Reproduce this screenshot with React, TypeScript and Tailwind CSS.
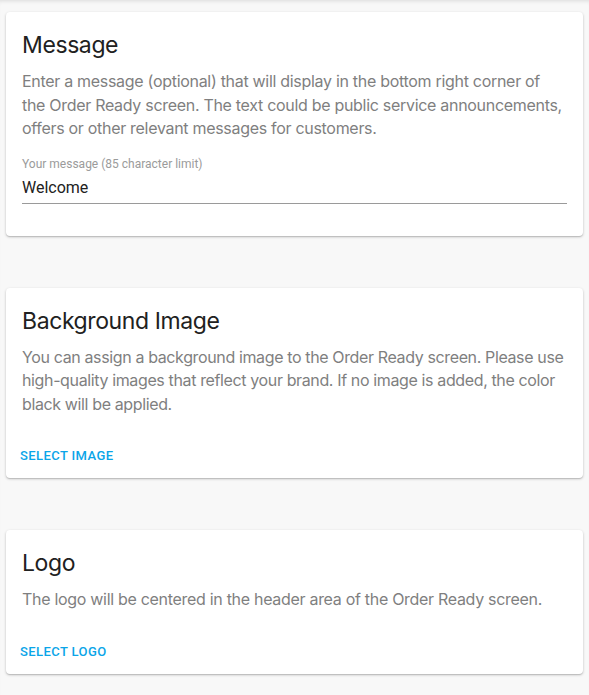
import React from "react";

// 設定カード（タイトル・説明・任意の中身）
function SettingsCard({
  title,
  description,
  tight,
  children
}: {
  title: string;
  description: string;
  tight?: boolean;
  children?: React.ReactNode;
}) {
  return (
    <section className="mx-[6px] bg-white rounded-[4px] shadow-[0_1px_3px_rgba(0,0,0,0.2),0_1px_1px_rgba(0,0,0,0.12)]">
      <div className="px-4 pt-[17px]">
        <h2 className="text-[23px] leading-8 tracking-[-0.4px] text-[#212121] font-['Inter',sans-serif] font-normal">
          {title}
        </h2>
        <p
          className={`mt-[9px] text-[16px] leading-[23.5px] text-[#7f7f7f] font-['Inter',sans-serif] ${
            tight ? "tracking-[-0.37px]" : "tracking-[-0.3px]"
          }`}
        >
          {description}
        </p>
      </div>
      {children}
    </section>
  );
}

function ActionButton({ label }: { label: string }) {
  return (
    <div className="px-[6px] mt-[22px] pb-1">
      <button className="h-9 px-2 text-[13px] font-medium uppercase tracking-[0.4px] text-[#0aa5e8] font-['Roboto',sans-serif] rounded">
        {label}
      </button>
    </div>
  );
}

export default function App() {
  return (
    <div className="min-h-[695px] bg-[#f8f8f8] pt-3 pb-6 shadow-[inset_0_4px_4px_-3px_rgba(0,0,0,0.12)]">
      <div className="flex flex-col gap-[52px]">
        <SettingsCard
          title="Message"
          description="Enter a message (optional) that will display in the bottom right corner of the Order Ready screen. The text could be public service announcements, offers or other relevant messages for customers."
        >
          <div className="px-4 pt-[15px] pb-8 font-['Roboto',sans-serif]">
            <label className="block text-[12px] leading-4 text-[#9b9b9b]">Your message (85 character limit)</label>
            <div className="h-[32px] pt-[4px] border-b border-[#9a9a9a]">
              <input
                className="w-full text-[16px] leading-6 text-[#212121] outline-none bg-transparent"
                defaultValue="Welcome"
              />
            </div>
          </div>
        </SettingsCard>

        <SettingsCard
          title="Background Image"
          tight
          description="You can assign a background image to the Order Ready screen. Please use high-quality images that reflect your brand. If no image is added, the color black will be applied."
        >
          <ActionButton label="Select image" />
        </SettingsCard>

        <SettingsCard
          title="Logo"
          description="The logo will be centered in the header area of the Order Ready screen."
        >
          <ActionButton label="Select logo" />
        </SettingsCard>
      </div>
    </div>
  );
}
